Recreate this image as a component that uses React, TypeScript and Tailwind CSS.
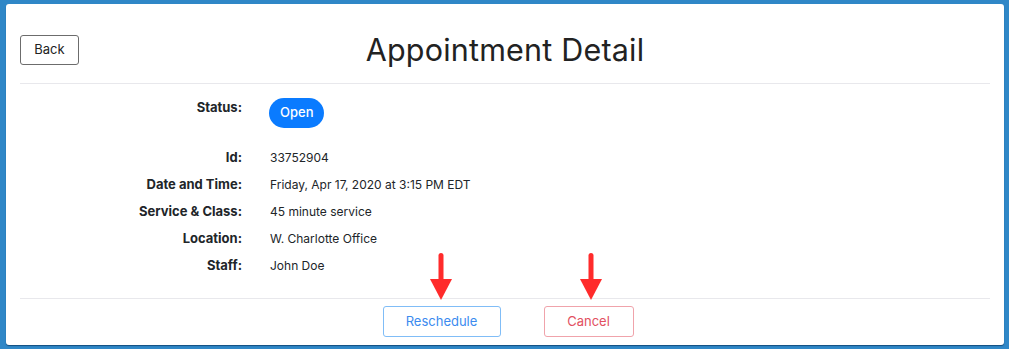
import React from "react";

function Arrow() {
  return (
    <svg width="24" height="48" viewBox="0 0 24 48" className="block">
      <rect x="9.5" y="0" width="5" height="30" rx="2.5" fill="#ff2b2b" />
      <polygon points="1,26 23,26 12,47" fill="#ff2b2b" />
    </svg>
  );
}

const rows: [string, string][] = [
  ["Id:", "33752904"],
  ["Date and Time:", "Friday, Apr 17, 2020 at 3:15 PM EDT"],
  ["Service & Class:", "45 minute service"],
  ["Location:", "W. Charlotte Office"],
  ["Staff:", "John Doe"],
];

export default function App() {
  return (
    <div
      className="w-[1009px] h-[349px] bg-[#2f87c7] pl-[6px] pt-[4px] pr-[5px] pb-[4px]"
      style={{ fontFamily: "Inter, 'Noto Sans', sans-serif" }}
    >
      <div className="relative h-[341px] w-[998px] bg-white rounded-[3px] shadow-[0_1px_1px_rgba(0,40,80,0.6)] px-[14px] text-[#212529]">
        {/* header */}
        <div className="relative flex items-start pt-[31px] h-[80px] border-b border-[#e8e8ec]">
          <button className="h-[30px] w-[59px] rounded-[3px] border border-[#6c6c6c] text-[13px] text-[#222] bg-white">
            Back
          </button>
          <h1 className="absolute left-0 right-0 top-[26px] text-center text-[30.5px] leading-[40px] font-normal text-[#222] tracking-[0.2px] pointer-events-none">
            Appointment Detail
          </h1>
        </div>
        {/* details */}
        <div className="pt-[13px] h-[215px] border-b border-[#e8e8ec] text-[13px]">
          <div className="flex items-start">
            <div className="w-[222px] text-right font-bold leading-[20px]">Status:</div>
            <div className="ml-[27px] mt-[1px] h-[30px] px-[11px] rounded-full bg-[#0a7bff] text-white flex items-center text-[13px] font-medium">
              Open
            </div>
          </div>
          <div className="mt-[16px]">
            {rows.map(([k, v]) => (
              <div key={k} className="flex leading-[27px]">
                <div className="w-[222px] text-right font-bold">{k}</div>
                <div className="ml-[28px] text-[12px]">{v}</div>
              </div>
            ))}
          </div>
        </div>
        {/* footer */}
        <div className="flex justify-center gap-[43px] pt-[7px] pl-[6px]">
          <button className="h-[31px] w-[118px] rounded-[3px] border border-[#80bdf7] text-[#3b8bef] text-[13px] bg-white">
            Reschedule
          </button>
          <button className="h-[31px] w-[90px] rounded-[3px] border border-[#f0a3ab] text-[#e2505f] text-[13px] bg-white">
            Cancel
          </button>
        </div>
        <div className="absolute left-[423px] top-[249px]">
          <Arrow />
        </div>
        <div className="absolute left-[573px] top-[249px]">
          <Arrow />
        </div>
      </div>
    </div>
  );
}
